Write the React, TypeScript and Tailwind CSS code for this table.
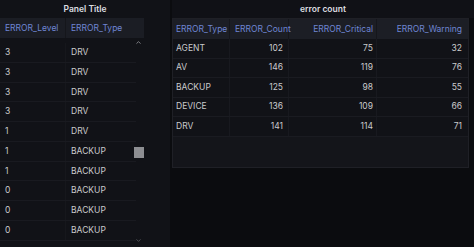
import { ChevronUp, ChevronDown } from 'lucide-react'

const leftRows = [
  ['3', 'DRV'],
  ['3', 'DRV'],
  ['3', 'DRV'],
  ['3', 'DRV'],
  ['1', 'DRV'],
  ['1', 'BACKUP'],
  ['1', 'BACKUP'],
  ['0', 'BACKUP'],
  ['0', 'BACKUP'],
  ['0', 'BACKUP'],
]

const countRows = [
  { type: 'AGENT', count: 102, critical: 75, warning: 32 },
  { type: 'AV', count: 146, critical: 119, warning: 76 },
  { type: 'BACKUP', count: 125, critical: 98, warning: 55 },
  { type: 'DEVICE', count: 136, critical: 109, warning: 66 },
  { type: 'DRV', count: 141, critical: 114, warning: 71 },
]

export default function App() {
  return (
    <div
      className="w-[474px] h-[247px] flex gap-[2px] bg-[#0b0c0f] overflow-hidden text-[8.5px] text-[#c9cacd]"
      style={{ fontFamily: 'Inter, "Noto Sans", sans-serif' }}
    >
      {/* Left panel */}
      <div className="w-[170px] h-full bg-[#111217] flex flex-col">
        <div className="h-[18px] flex items-center justify-center font-semibold text-[#dcdde0]">
          Panel Title
        </div>
        <div className="relative w-[144px] flex-1">
          <div className="h-[20px] flex bg-[#1b1d24] text-[#6f86d4]">
            <div className="w-[66px] pl-[5px] flex items-center border-r border-[#15161b]">ERROR_Level</div>
            <div className="flex-1 pl-[5px] flex items-center">ERROR_Type</div>
          </div>
          <div className="h-[5px]" />
          {leftRows.map((r, i) => (
            <div key={i} className="w-[136px] h-[19.75px] flex border-b border-[#191a20]">
              <div className="w-[66px] pl-[5px] flex items-center border-r border-[#16171c]">{r[0]}</div>
              <div className="flex-1 pl-[5px] flex items-center">{r[1]}</div>
            </div>
          ))}
          {/* scrollbar */}
          <ChevronUp className="absolute left-[135px] top-[21px] w-[7px] h-[7px] text-[#8a8b90]" strokeWidth={3} />
          <div className="absolute left-[134px] top-[129px] w-[10px] h-[11px] bg-[#8d8e92]" />
          <ChevronDown className="absolute left-[135px] top-[219px] w-[7px] h-[7px] text-[#55565b]" strokeWidth={3} />
        </div>
      </div>

      {/* Right panel */}
      <div className="flex-1 h-full flex flex-col">
        <div className="h-[18px] bg-[#101116] flex items-center justify-center font-semibold text-[#dcdde0]">
          error count
        </div>
        <div className="w-[297px] h-[150px] bg-[#14151a] border border-[#1f2026] flex flex-col">
          <div className="h-[20px] flex bg-[#1c1e25] text-[#6f86d4]">
            <div className="w-[57px] pl-[3px] flex items-center border-r border-[#15161b]">ERROR_Type</div>
            <div className="w-[59px] pl-[5px] flex items-center border-r border-[#15161b]">ERROR_Count</div>
            <div className="w-[88px] pr-[3px] flex items-center justify-end border-r border-[#15161b]">ERROR_Critical</div>
            <div className="flex-1 pr-[6px] flex items-center justify-end">ERROR_Warning</div>
          </div>
          {countRows.map((r) => (
            <div key={r.type} className="h-[19.5px] flex border-b border-[#1a1b21] bg-[#111217]">
              <div className="w-[57px] pl-[3px] flex items-center border-r border-[#18191f]">{r.type}</div>
              <div className="w-[59px] pr-[5px] flex items-center justify-end border-r border-[#18191f]">{r.count}</div>
              <div className="w-[88px] pr-[3px] flex items-center justify-end border-r border-[#18191f]">{r.critical}</div>
              <div className="flex-1 pr-[6px] flex items-center justify-end">{r.warning}</div>
            </div>
          ))}
        </div>
      </div>
    </div>
  )
}
